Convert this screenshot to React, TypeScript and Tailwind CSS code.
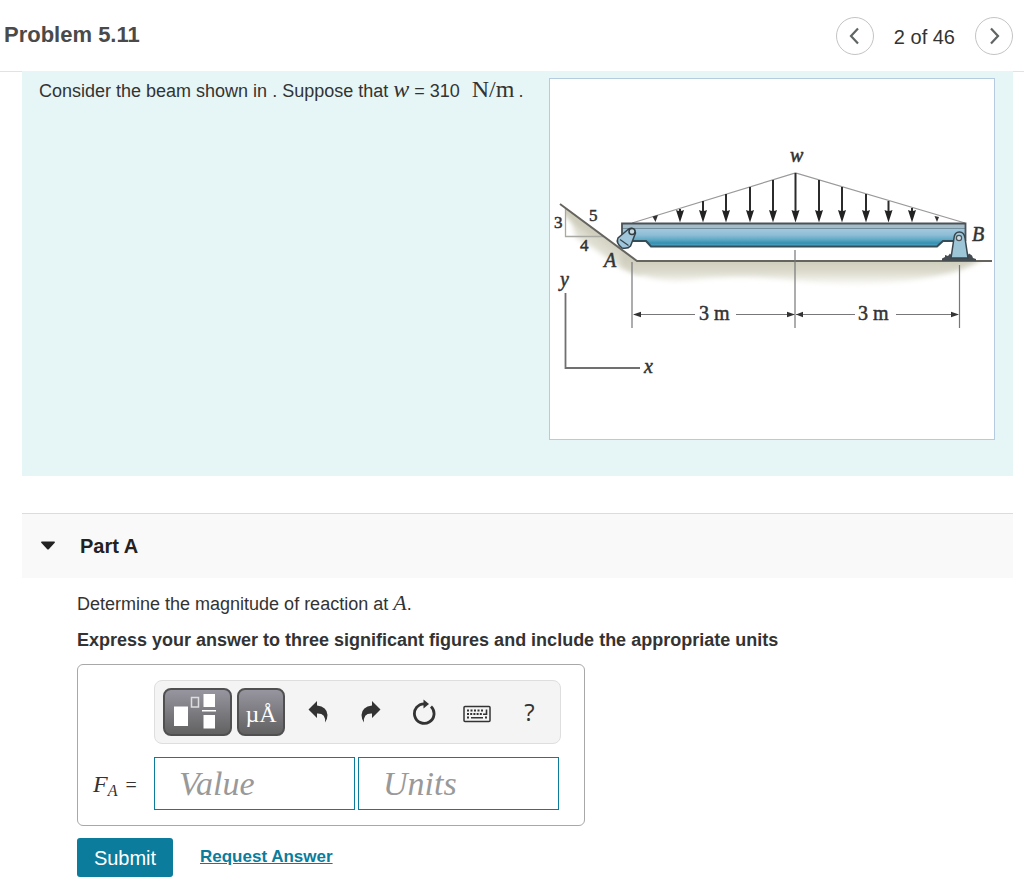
import type { ReactNode } from "react";

const serif = "font-['Liberation_Serif',serif]";

type Arrow = { x: number; top: number };

const loadArrows: Arrow[] = [
  { x: 680, top: 209 },
  { x: 703, top: 201 },
  { x: 726, top: 194 },
  { x: 750, top: 187 },
  { x: 773, top: 180 },
  { x: 795.5, top: 173 },
  { x: 819, top: 180 },
  { x: 842, top: 187 },
  { x: 866, top: 194 },
  { x: 888.5, top: 201 },
  { x: 912, top: 208 },
];

function BeamFigure() {
  return (
    <svg
      viewBox="550 79 444 360"
      className="block h-[362px] w-[446px] shrink-0 border border-[#b5cbe0] bg-white"
      role="img"
      aria-label="Beam AB with a triangular distributed load of peak intensity w"
    >
      <defs>
        <linearGradient id="beam" x1="0" y1="0" x2="0" y2="1">
          <stop offset="0" stopColor="#b4d3e4" />
          <stop offset="0.5" stopColor="#8dbdd6" />
          <stop offset="0.72" stopColor="#5ba6c4" />
          <stop offset="0.85" stopColor="#3590b2" />
          <stop offset="1" stopColor="#5aa9c6" />
        </linearGradient>
        <linearGradient id="soil" gradientUnits="userSpaceOnUse" x1="0" y1="260" x2="0" y2="286">
          <stop offset="0" stopColor="#cfcebd" />
          <stop offset="0.45" stopColor="#dad9cb" />
          <stop offset="1" stopColor="#f2f1ea" stopOpacity="0.4" />
        </linearGradient>
        <linearGradient id="slope" gradientUnits="userSpaceOnUse" x1="620" y1="246" x2="600" y2="272">
          <stop offset="0" stopColor="#cfcebd" />
          <stop offset="1" stopColor="#f6f5f0" />
        </linearGradient>
        <filter id="soft" x="-10%" y="-40%" width="120%" height="180%">
          <feGaussianBlur stdDeviation="2.5" />
        </filter>
        <clipPath id="underground">
          <path d="M560 204 L637 261 L992 261 V300 H560 Z" />
        </clipPath>
        <clipPath id="wedge">
          <path d="M566 208 L604 236 H566 Z" />
        </clipPath>
      </defs>

      <g clipPath="url(#underground)">
        <path d="M568 206 L606 232 L645 260 L640 276 L620 268 L596 250 L576 238 Z" fill="url(#slope)" filter="url(#soft)" />
        <path
          d="M622 252 H990 C975 268 950 274 925 278 C880 286 830 285 790 280 C740 274 710 278 680 281 C655 281 640 276 622 266 Z"
          fill="url(#soil)"
          filter="url(#soft)"
        />
      </g>
      <g clipPath="url(#wedge)">
        <path d="M560 200 L610 236 H592 L562 214 Z" fill="#cfcebd" filter="url(#soft)" />
      </g>
      <path d="M565.500 208 V236.500 H604" fill="none" stroke="#a9a9a4" strokeWidth="1.3" />
      <path d="M560 204 L637 261 H992" fill="none" stroke="#66645f" strokeWidth="2" />

      <path d="M632 223 L795.500 173 L965 223" fill="none" stroke="#999" strokeWidth="1.200" />
      {loadArrows.map((a) => (
        <g key={a.x}>
          <path d={`M${a.x} ${a.top} V214`} stroke="#2b2b2b" strokeWidth="2" />
          <path d={`M${a.x - 4} 210 Q${a.x} 212 ${a.x + 4} 210 L${a.x} 222.500 Z`} fill="#222" />
        </g>
      ))}
      <path d="M652.500 216.500 L658 215 L655.500 222 Z M934.500 216 L939 217 L937 222 Z" fill="#333" />

      <path
        d="M622 223.500 H965.500 V241 H943 L937 246.500 H651 L646 241 H622 Z"
        fill="url(#beam)"
      />
      <path d="M622 224 H965.500 V228 H622 Z" fill="#a5bdc9" />
      <path d="M622 228.500 H965" stroke="#718e9d" strokeWidth="1" />
      <path d="M622 240 V223.500 H965.500 V241" fill="none" stroke="#4a5257" strokeWidth="1.800" />
      <path d="M632 241 H646 L651 246.500 H937 L943 241 H956" fill="none" stroke="#344d59" strokeWidth="2" />

      <path
        d="M635.500 233 L630.500 246 Q628 249 622 248 Q615.500 243 618 238 L628 229.500 Q634 226 635.500 233 Z"
        fill="#9fc6db"
        stroke="#35434b"
        strokeWidth="1.500"
      />
      <circle cx="632" cy="231.500" r="3" fill="#c7d9e1" stroke="#333d42" strokeWidth="1.500" />
      <path d="M620 239.500 L628.500 245.500" stroke="#35434b" strokeWidth="1.200" />

      <path d="M942 261 V258.500 L945 257 V255 L948 256 L950 253.500 L952 256 H967 L969 253.500 L972 255.500 L973 258 L976 259 V261 Z" fill="#454c51" />
      <path
        d="M951 258 L954 238 Q954.500 232 959.500 232 Q964 232 965 238 L968 258 Z"
        fill="#9cc5d8"
        stroke="#39464d"
        strokeWidth="1.500"
      />
      <circle cx="959" cy="238" r="2.600" fill="#d1dfe4" stroke="#4c5356" strokeWidth="1.200" />

      <g stroke="#77777a" strokeWidth="1.200" fill="none">
        <path d="M632 262 V328 M795 250 V328 M959.500 265 V328" />
        <path d="M634 314.500 H695 M736 314.500 H794 M796 314.500 H855 M896 314.500 H958" />
      </g>
      <path
        d="M633 314.500 L641 311.800 V317.200 Z M795 314.500 L787 311.800 V317.200 Z M796 314.500 L803 311.800 V317.200 Z M959 314.500 L951 311.800 V317.200 Z"
        fill="#333"
      />
      <path d="M565.500 293 V368 H640" fill="none" stroke="#707070" strokeWidth="1.800" />

      <g className={serif} fill="#333" stroke="#333" strokeWidth="0.500">
        <g fontSize="17">
          <text x="554" y="228">3</text>
          <text x="589" y="221">5</text>
          <text x="580" y="251">4</text>
        </g>
        <g fontSize="20">
          <text x="699" y="320">3 m</text>
          <text x="858" y="320">3 m</text>
        </g>
        <g fontSize="20" fontStyle="italic">
          <text x="790" y="162">w</text>
          <text x="604" y="267">A</text>
          <text x="972" y="241">B</text>
          <text x="560" y="286">y</text>
          <text x="644" y="373">x</text>
        </g>
      </g>
    </svg>
  );
}

function RoundButton({ label, d }: { label: string; d: string }) {
  return (
    <button
      type="button"
      aria-label={label}
      className="flex size-[38px] items-center justify-center rounded-full border border-[#c4c4c4] bg-white"
    >
      <svg viewBox="0 0 20 20" className="size-5" fill="none" stroke="#5f6464" strokeWidth="2.200">
        <path d={d} />
      </svg>
    </button>
  );
}

function ToolButton({ label, children }: { label: string; children: ReactNode }) {
  return (
    <button type="button" aria-label={label} className="flex h-12 w-[53px] items-center justify-center text-[#333]">
      {children}
    </button>
  );
}

const darkButton =
  "flex h-12 items-center justify-center rounded-lg border-2 border-[#505050] bg-linear-to-b from-[#9796a0] to-[#626262] text-white";

const answerInput =
  "h-[53px] w-[201px] border border-[#0b7c9c] bg-white pl-6 text-[34px] italic text-[#333] outline-none placeholder:text-[#999] placeholder:opacity-100 font-['Liberation_Serif',serif]";

export default function App() {
  return (
    <div className="bg-white font-['Liberation_Sans',Arial,sans-serif] text-lg text-[#333]">
      <header className="flex h-[72px] items-center justify-between border-b border-[#e2e2e2] pr-[11px] pl-1">
        <h1 className="text-[22px] font-bold text-[#4a4a4a]">Problem 5.11</h1>
        <nav aria-label="Problems" className="flex items-center gap-5 text-xl">
          <RoundButton label="Previous problem" d="M13 2.500 L6 10 L13 17.500" />
          <span className="pt-0.5">2 of 46</span>
          <RoundButton label="Next problem" d="M7 2.500 L14 10 L7 17.500" />
        </nav>
      </header>

      <main className="mr-[11px] ml-[22px]">
        <section className="-mt-px flex items-start justify-between bg-[#e6f6f7] pt-[7px] pr-[18px] pb-9 pl-[17px]">
          <p className="leading-[22px]">
            Consider the beam shown in . Suppose that <i className={`text-2xl leading-[22px] ${serif}`}>w</i> = 310
            <span className={`mx-1 pl-2 text-2xl leading-[22px] ${serif}`}>N/m</span>.
          </p>
          <BeamFigure />
        </section>

        <section className="mt-[37px]">
          <h2 className="border-t border-[#dcdcdc] bg-[#f9f9f9]">
            <button type="button" aria-expanded="true" className="flex h-16 w-full items-center gap-6 pl-[18px] text-xl font-bold text-[#222]">
              <svg viewBox="0 0 16 10" className="h-[10px] w-4" fill="#222">
                <path d="M1.500 0.500 H14.500 Q15.500 1 14.500 2 L9 8 Q8 9 7 8 L1.500 2 Q0.500 1 1.500 0.500 Z" />
              </svg>
              Part A
            </button>
          </h2>

          <div className="pt-[11px] pl-[55px]">
            <p className="leading-7">
              Determine the magnitude of reaction at <i className={`text-[22px] ${serif}`}>A</i>.
            </p>
            <p className="mt-2 leading-7 font-bold">
              Express your answer to three significant figures and include the appropriate units
            </p>

            <form onSubmit={(e) => e.preventDefault()}>
              <div className="mt-[10px] w-fit rounded-md border border-[#a8a8a8] pt-[15px] pr-[23px] pb-[15px] pl-[15px]">
                <div role="toolbar" aria-label="Equation tools" className="ml-[61px] flex h-16 items-center rounded-lg border border-[#dedede] bg-[#f4f4f4] pr-1 pl-2">
                  <button type="button" aria-label="Templates" className={`w-[69px] ${darkButton}`}>
                    <svg viewBox="0 0 65 44" className="h-11 w-[65px]" fill="#fff">
                      <path d="M9 16.500 H23 V36 H9 Z M38.500 4 H50 V17 H38.500 Z M38.500 25 H50 V38.500 H38.500 Z M37 20 H51 V21.500 H37 Z" />
                      <path d="M26.500 7.500 H33.500 V17 H26.500 Z" fill="none" stroke="#ddd" strokeWidth="1.500" />
                    </svg>
                  </button>
                  <button type="button" aria-label="Units symbols" className={`ml-[5px] w-12 pt-1 text-2xl ${serif} ${darkButton}`}>
                    µÅ
                  </button>
                  <div className="ml-1.5 flex">
                    <ToolButton label="Undo">
                      <svg viewBox="0 0 20 22" className="h-[22px] w-5" fill="currentColor">
                        <path d="M0.500 8.500 L9 0 V4.500 Q19 5.500 19.500 14 Q19.500 18 17 21.500 Q18 12 9 12.500 V17 Z" />
                      </svg>
                    </ToolButton>
                    <ToolButton label="Redo">
                      <svg viewBox="0 0 20 22" className="h-[22px] w-5" fill="currentColor">
                        <path d="M19.500 8.500 L11 0 V4.500 Q1 5.500 0.500 14 Q0.500 18 3 21.500 Q2 12 11 12.500 V17 Z" />
                      </svg>
                    </ToolButton>
                    <ToolButton label="Reset">
                      <svg viewBox="0 0 24 26" className="h-[26px] w-6" fill="currentColor">
                        <path d="M19 7.500 A9.800 9.800 0 1 1 12.500 4.800" fill="none" stroke="currentColor" strokeWidth="2.800" />
                        <path d="M11.500 0.500 L17 5 L11.500 9.500 Z" />
                      </svg>
                    </ToolButton>
                    <ToolButton label="Keyboard shortcuts">
                      <svg viewBox="0 0 28 18" className="mt-1 h-[18px] w-7" fill="none" stroke="currentColor">
                        <rect x="1" y="1.500" width="26" height="15" rx="1" strokeWidth="1.500" />
                        <path d="M4 5.500 H21 M4 12.500 H6 M22 12.500 H24" strokeWidth="1.800" strokeDasharray="2 1.500" />
                        <path d="M4 9 H20" strokeWidth="1.800" strokeDasharray="2 1.200" />
                        <path d="M8 12.800 H20 M20 9.200 H23.500 V4.500" strokeWidth="1.600" />
                      </svg>
                    </ToolButton>
                    <ToolButton label="Help">
                      <span className="font-['Open_Sans',sans-serif] text-2xl">?</span>
                    </ToolButton>
                  </div>
                </div>
                <div className="mt-[13px] flex items-center gap-[3px]">
                  <label htmlFor="value" className={`w-[58px] text-2xl whitespace-nowrap ${serif}`}>
                    <i>F</i>
                    <sub className="text-base italic">A</sub>
                    <span className="ml-2 text-xl">=</span>
                  </label>
                  <input id="value" type="text" placeholder="Value" className={answerInput} />
                  <input id="units" type="text" aria-label="Units" placeholder="Units" className={answerInput} />
                </div>
              </div>

              <div className="mt-3 flex items-center gap-[27px]">
                <button type="submit" className="h-[39px] w-24 rounded-[3px] bg-[#0b7c9c] text-xl text-white">
                  Submit
                </button>
                <a href="#answer" className="text-[17px] font-bold text-[#0b7c9c] underline">
                  Request Answer
                </a>
              </div>
            </form>
          </div>
        </section>
      </main>
    </div>
  );
}
